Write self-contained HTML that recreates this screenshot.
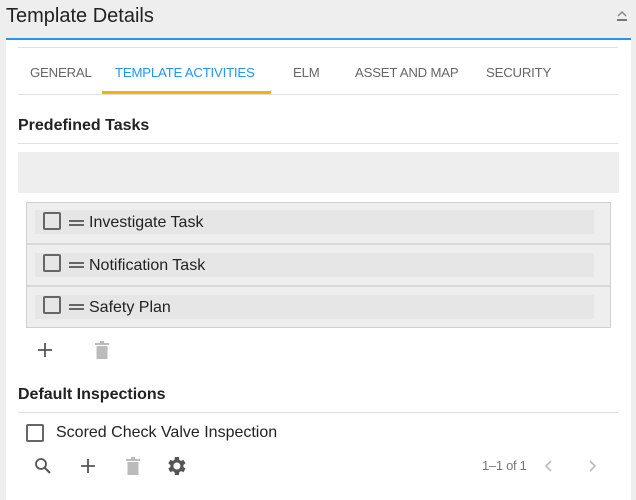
<!DOCTYPE html><html><head><style>
body{margin:0;width:636px;height:493px;background:#eeeeee;font-family:"Liberation Sans",sans-serif;position:relative;overflow:hidden;color:#222}
.a{position:absolute}
.t{font-size:13.2px;color:#666;top:65px;letter-spacing:-0.2px}
.cb{position:absolute;width:14px;height:14px;border:2px solid #666;border-radius:2px;box-sizing:content-box}
.row{position:absolute;left:27px;width:583px;height:40px;border-top:2px solid #d8d8d8}
.in{position:absolute;left:8px;top:8px;width:559px;height:24px;background:#e6e6e6}
.eq{position:absolute;left:42px;top:10px;width:15px;height:6px;border-top:2px solid #666;border-bottom:2px solid #666;box-sizing:border-box}
.lb{position:absolute;left:62px;top:3px;font-size:16px;color:#222}
</style></head><body>
<div class="a" style="left:6px;top:5px;font-size:20px;color:#222">Template Details</div>
<svg class="a" style="left:615px;top:10px" width="14" height="12"><path d="M3 6 L7 2 L11 6" stroke="#888" stroke-width="1.5" fill="none"/><rect x="2" y="9" width="10" height="2" fill="#777"/></svg>
<div class="a" style="left:6px;top:38px;width:625px;height:460px;background:#fff;border-top:2px solid #2196f3"></div>
<div class="a" style="left:18px;top:47px;width:600px;height:1px;background:#e0e0e0"></div>
<div class="a t" style="left:30px">GENERAL</div>
<div class="a t" style="left:115px;color:#2196f3">TEMPLATE ACTIVITIES</div>
<div class="a t" style="left:293px">ELM</div>
<div class="a t" style="left:355px">ASSET AND MAP</div>
<div class="a t" style="left:486px">SECURITY</div>
<div class="a" style="left:102px;top:91px;width:169px;height:3px;background:#f4b400"></div>
<div class="a" style="left:18px;top:94px;width:600px;height:1px;background:#e0e0e0"></div>
<div class="a" style="left:18px;top:117px;font-size:16px;font-weight:bold;color:#222">Predefined Tasks</div>
<div class="a" style="left:18px;top:143px;width:600px;height:1px;background:#e0e0e0"></div>
<div class="a" style="left:18px;top:152px;width:601px;height:41px;background:#eeeeee"></div>
<div class="a" style="left:26px;top:202px;width:583px;height:124px;background:#eeeeee;border:1px solid #d0d0d0"></div>
<div class="row" style="top:201px;border-top:none;height:42px"><div class="in" style="top:9px"></div><div class="cb" style="left:16px;top:11px"></div><div class="eq" style="top:19px"></div><div class="lb" style="top:13px">Investigate Task</div></div>
<div class="row" style="top:243px"><div class="in"></div><div class="cb" style="left:16px;top:9px"></div><div class="eq" style="top:17px"></div><div class="lb" style="top:12px">Notification Task</div></div>
<div class="row" style="top:285px"><div class="in"></div><div class="cb" style="left:16px;top:9px"></div><div class="eq" style="top:17px"></div><div class="lb" style="top:12px">Safety Plan</div></div>
<svg class="a" style="left:37px;top:342px" width="16" height="16"><path d="M8 1V15M1 8H15" stroke="#555" stroke-width="1.8"/></svg>
<svg class="a" style="left:94px;top:341px" width="16" height="18"><rect x="1" y="2" width="14" height="2" fill="#bbb"/><rect x="6" y="0" width="4" height="2" fill="#bbb"/><rect x="2.5" y="5" width="11" height="13" fill="#bbb"/></svg>
<div class="a" style="left:18px;top:386px;font-size:16px;font-weight:bold;color:#222">Default Inspections</div>
<div class="a" style="left:18px;top:412px;width:600px;height:1px;background:#e0e0e0"></div>
<div class="cb" style="left:26px;top:424px"></div>
<div class="a" style="left:56px;top:424px;font-size:16px;color:#222">Scored Check Valve Inspection</div>
<svg class="a" style="left:34px;top:457px" width="18" height="18"><circle cx="7" cy="7" r="5" stroke="#555" stroke-width="1.8" fill="none"/><path d="M10.5 10.5L16 16" stroke="#555" stroke-width="2"/></svg>
<svg class="a" style="left:80px;top:458px" width="16" height="16"><path d="M8 1V15M1 8H15" stroke="#555" stroke-width="1.8"/></svg>
<svg class="a" style="left:125px;top:457px" width="16" height="18"><rect x="1" y="2" width="14" height="2" fill="#bbb"/><rect x="6" y="0" width="4" height="2" fill="#bbb"/><rect x="2.5" y="5" width="11" height="13" fill="#bbb"/></svg>
<svg class="a" style="left:164px;top:454px" width="24" height="24" viewBox="0 0 24 24"><path fill="#555" d="M19.4 13a7.5 7.5 0 0 0 0-2l2.1-1.6-2-3.5-2.5 1a7.3 7.3 0 0 0-1.7-1L14.9 3h-4l-.4 2.9a7.3 7.3 0 0 0-1.7 1l-2.5-1-2 3.5L6.4 11a7.5 7.5 0 0 0 0 2l-2.1 1.6 2 3.5 2.5-1a7.3 7.3 0 0 0 1.7 1l.4 2.9h4l.4-2.9a7.3 7.3 0 0 0 1.7-1l2.5 1 2-3.5zM12.9 15.5a3.5 3.5 0 1 1 0-7 3.5 3.5 0 0 1 0 7z"/></svg>
<div class="a" style="left:482px;top:458px;font-size:13px;color:#777;letter-spacing:-0.3px">1–1 of 1</div>
<svg class="a" style="left:543px;top:459px" width="10" height="14"><path d="M8 2L3 7L8 12" stroke="#bbb" stroke-width="1.6" fill="none"/></svg>
<svg class="a" style="left:588px;top:459px" width="10" height="14"><path d="M2 2L7 7L2 12" stroke="#bbb" stroke-width="1.6" fill="none"/></svg>
</body></html>
